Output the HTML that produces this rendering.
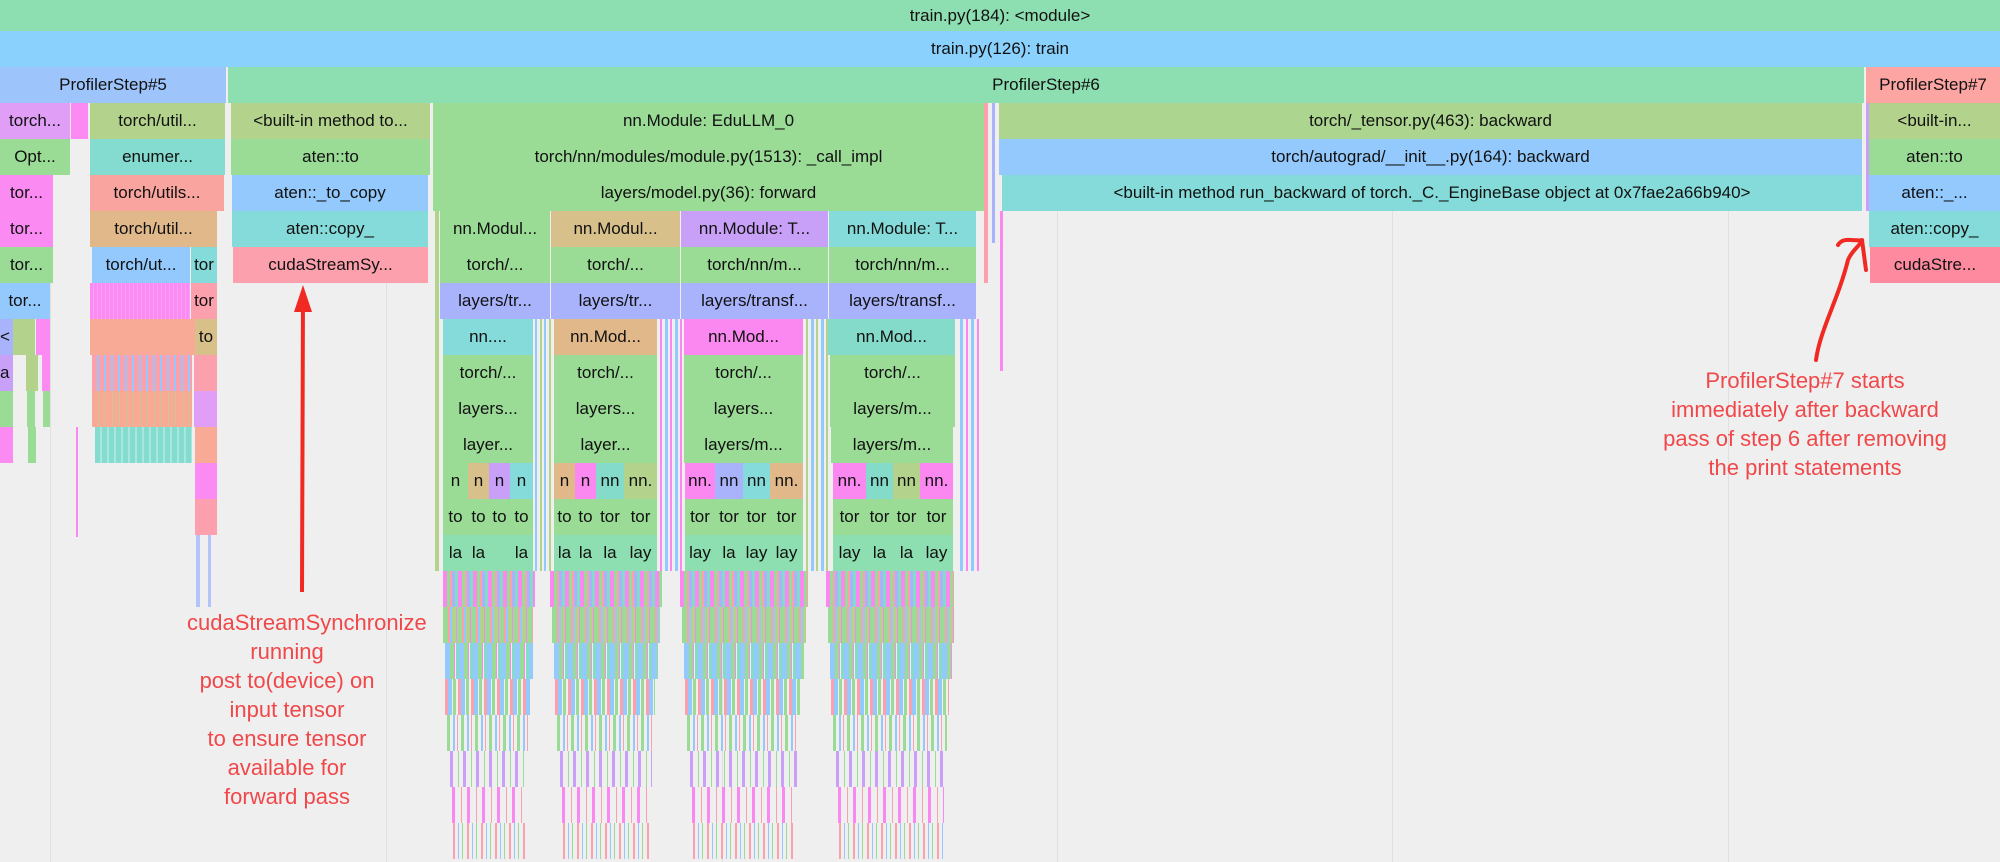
<!DOCTYPE html>
<html><head><meta charset="utf-8"><style>
html,body{margin:0;padding:0;width:2000px;height:862px;overflow:hidden;background:#efefef;}
body{position:relative;font-family:"Liberation Sans",Arial,sans-serif;}
.g{position:absolute;top:0;width:1px;height:862px;background:#e0e0e0;}
.b{position:absolute;height:36px;line-height:36px;text-align:center;overflow:hidden;white-space:nowrap;font-size:17px;color:#111;}
.n{position:absolute;height:36px;}
.ann{position:absolute;color:#f0484a;font-size:22px;text-align:center;line-height:29px;white-space:nowrap;}
.r1{background:repeating-linear-gradient(90deg,#fb88f0 0 4px,#9adb96 4px 7px,#fda0ae 7px 9px,#a9b3fb 9px 12px,#84dbca 12px 15px)}
.r2{background:repeating-linear-gradient(90deg,#9adb96 0 5px,#fda0ae 5px 7px,#93c9fd 7px 9px,#b3d38d 9px 13px,#fb88f0 13px 14px)}
.r3{background:repeating-linear-gradient(90deg,#93c9fd 0 5px,#9adb96 5px 9px,#fb88f0 9px 10px,transparent 10px 11px,#84dbca 11px 14px)}
.r4{background:repeating-linear-gradient(90deg,#fda0ae 0 3px,#93c9fd 3px 7px,transparent 7px 8px,#9adb96 8px 11px,transparent 11px 13px)}
.r5{background:repeating-linear-gradient(90deg,#9adb96 0 3px,transparent 3px 6px,#93c9fd 6px 8px,transparent 8px 10px,#fda0ae 10px 11px,transparent 11px 14px)}
.r6{background:repeating-linear-gradient(90deg,#c9a0f8 0 3px,transparent 3px 8px,#9adb96 8px 9px,transparent 9px 13px)}
.r7{background:repeating-linear-gradient(90deg,#fb88f0 0 3px,transparent 3px 9px,#fda0ae 9px 10px,transparent 10px 15px)}
.r8{background:repeating-linear-gradient(90deg,#fda0ae 0 2px,transparent 2px 5px,#93c9fd 5px 6px,transparent 6px 9px,#9adb96 9px 10px,transparent 10px 14px)}
</style></head><body>
<div class="g" style="left:50px"></div><div class="g" style="left:386px"></div><div class="g" style="left:722px"></div>
<div class="g" style="left:1057px"></div><div class="g" style="left:1392px"></div><div class="g" style="left:1728px"></div>

<div class="b" style="left:0;top:0;width:2000px;height:31px;line-height:31px;background:#8ddeb1">train.py(184): &lt;module&gt;</div>
<div class="b" style="left:0;top:31px;width:2000px;background:#8ad2fd">train.py(126): train</div>
<div class="b" style="left:0;top:67px;width:226px;background:#9ec5fb">ProfilerStep#5</div>
<div class="b" style="left:228px;top:67px;width:1636px;background:#8ddeb1">ProfilerStep#6</div>
<div class="b" style="left:1866px;top:67px;width:134px;background:#fca5a2">ProfilerStep#7</div>

<div class="b" style="left:0;top:103px;width:70px;background:#e09ef6">torch...</div>
<div class="n" style="left:71px;top:103px;width:17px;background:#fb8af2"></div>
<div class="b" style="left:90px;top:103px;width:135px;background:#b3d38d">torch/util...</div>
<div class="b" style="left:231px;top:103px;width:199px;background:#b3d38d">&lt;built-in method to...</div>
<div class="b" style="left:433px;top:103px;width:551px;background:#9adb96">nn.Module: EduLLM_0</div>
<div class="b" style="left:999px;top:103px;width:863px;background:#acd58f">torch/_tensor.py(463): backward</div>
<div class="b" style="left:1869px;top:103px;width:131px;background:#b3d38d">&lt;built-in...</div>
<div class="b" style="left:0;top:139px;width:70px;background:#9adb96">Opt...</div>
<div class="b" style="left:90px;top:139px;width:135px;background:#84dbd0">enumer...</div>
<div class="b" style="left:231px;top:139px;width:199px;background:#9adb96">aten::to</div>
<div class="b" style="left:433px;top:139px;width:551px;background:#9adb96">torch/nn/modules/module.py(1513): _call_impl</div>
<div class="b" style="left:999px;top:139px;width:863px;background:#93c9fd">torch/autograd/__init__.py(164): backward</div>
<div class="b" style="left:1869px;top:139px;width:131px;background:#9adb96">aten::to</div>
<div class="b" style="left:0;top:175px;width:53px;background:#fb8af2">tor...</div>
<div class="b" style="left:90px;top:175px;width:134px;background:#f9a49e">torch/utils...</div>
<div class="b" style="left:232px;top:175px;width:196px;background:#93c9fd">aten::_to_copy</div>
<div class="b" style="left:433px;top:175px;width:551px;background:#9adb96">layers/model.py(36): forward</div>
<div class="b" style="left:1002px;top:175px;width:860px;background:#84dbd9">&lt;built-in method run_backward of torch._C._EngineBase object at 0x7fae2a66b940&gt;</div>
<div class="b" style="left:1869px;top:175px;width:131px;background:#93c9fd">aten::_...</div>
<div class="b" style="left:0;top:211px;width:53px;background:#fb8af2">tor...</div>
<div class="b" style="left:90px;top:211px;width:127px;background:#e1b88a">torch/util...</div>
<div class="b" style="left:232px;top:211px;width:196px;background:#84dbd9">aten::copy_</div>
<div class="b" style="left:440px;top:211px;width:110px;background:#9adb96">nn.Modul...</div>
<div class="b" style="left:551px;top:211px;width:129px;background:#d7c08a">nn.Modul...</div>
<div class="b" style="left:681px;top:211px;width:147px;background:#c9a0f8">nn.Module: T...</div>
<div class="b" style="left:829px;top:211px;width:147px;background:#84dbd9">nn.Module: T...</div>
<div class="b" style="left:1869px;top:211px;width:131px;background:#84dbd9">aten::copy_</div>
<div class="b" style="left:0;top:247px;width:53px;background:#9adb96">tor...</div>
<div class="b" style="left:92px;top:247px;width:98px;background:#93c9fd">torch/ut...</div>
<div class="b" style="left:191px;top:247px;width:26px;background:#84dbd9">tor</div>
<div class="b" style="left:233px;top:247px;width:195px;background:#fda0ae">cudaStreamSy...</div>
<div class="b" style="left:440px;top:247px;width:110px;background:#9adb96">torch/...</div>
<div class="b" style="left:551px;top:247px;width:129px;background:#9adb96">torch/...</div>
<div class="b" style="left:681px;top:247px;width:147px;background:#9adb96">torch/nn/m...</div>
<div class="b" style="left:829px;top:247px;width:147px;background:#9adb96">torch/nn/m...</div>
<div class="b" style="left:1870px;top:247px;width:130px;background:#fd8a9e">cudaStre...</div>
<div class="b" style="left:0;top:283px;width:50px;background:#93c9fd">tor...</div>
<div class="n" style="left:90px;top:283px;width:100px;background:repeating-linear-gradient(90deg,#fb8af2 0 3px,#fca0f5 3px 4px)"></div>
<div class="b" style="left:191px;top:283px;width:26px;background:#fda0ae">tor</div>
<div class="b" style="left:440px;top:283px;width:110px;background:#a9b3fb">layers/tr...</div>
<div class="b" style="left:551px;top:283px;width:129px;background:#a9b3fb">layers/tr...</div>
<div class="b" style="left:681px;top:283px;width:147px;background:#a9b3fb">layers/transf...</div>
<div class="b" style="left:829px;top:283px;width:147px;background:#a9b3fb">layers/transf...</div>
<div class="b" style="left:0;top:319px;width:13px;background:#a9b3fb;text-align:left">&lt;</div>
<div class="n" style="left:13px;top:319px;width:22px;background:#b3d38d"></div>
<div class="n" style="left:36px;top:319px;width:14px;background:#fb8af2"></div>
<div class="n" style="left:90px;top:319px;width:105px;background:#f8aa96"></div>
<div class="b" style="left:195px;top:319px;width:22px;background:#d7c08a">to</div>
<div class="b" style="left:443px;top:319px;width:90px;background:#84dbd9">nn....</div>
<div class="b" style="left:554px;top:319px;width:103px;background:#e1b88a">nn.Mod...</div>
<div class="b" style="left:684px;top:319px;width:119px;background:#fb88f0">nn.Mod...</div>
<div class="b" style="left:828px;top:319px;width:127px;background:#84dbca">nn.Mod...</div>
<div class="b" style="left:0;top:355px;width:13px;background:#c9a0f8;text-align:left">a</div>
<div class="n" style="left:26px;top:355px;width:12px;background:#b3d38d"></div>
<div class="n" style="left:42px;top:355px;width:8px;background:#fb8af2"></div>
<div class="n" style="left:92px;top:355px;width:100px;background:repeating-linear-gradient(90deg,#fda0ae 0 5px,#93c9fd 5px 7px)"></div>
<div class="n" style="left:194px;top:355px;width:23px;background:#fda0ae"></div>
<div class="b" style="left:443px;top:355px;width:90px;background:#9adb96">torch/...</div>
<div class="b" style="left:554px;top:355px;width:103px;background:#9adb96">torch/...</div>
<div class="b" style="left:684px;top:355px;width:119px;background:#9adb96">torch/...</div>
<div class="b" style="left:830px;top:355px;width:125px;background:#9adb96">torch/...</div>
<div class="n" style="left:0;top:391px;width:13px;background:#9adb96"></div>
<div class="n" style="left:27px;top:391px;width:8px;background:#9adb96"></div>
<div class="n" style="left:43px;top:391px;width:7px;background:#9adb96"></div>
<div class="n" style="left:92px;top:391px;width:100px;background:repeating-linear-gradient(90deg,#f8aa96 0 6px,#c8c890 6px 7px)"></div>
<div class="n" style="left:194px;top:391px;width:23px;background:#e09ef6"></div>
<div class="b" style="left:443px;top:391px;width:90px;background:#9adb96">layers...</div>
<div class="b" style="left:554px;top:391px;width:103px;background:#9adb96">layers...</div>
<div class="b" style="left:684px;top:391px;width:119px;background:#9adb96">layers...</div>
<div class="b" style="left:830px;top:391px;width:125px;background:#9adb96">layers/m...</div>
<div class="n" style="left:0;top:427px;width:13px;background:#fb8af2"></div>
<div class="n" style="left:28px;top:427px;width:8px;background:#9adb96"></div>
<div class="n" style="left:95px;top:427px;width:97px;background:repeating-linear-gradient(90deg,#84dbd0 0 5px,#a8e8dc 5px 7px)"></div>
<div class="n" style="left:195px;top:427px;width:22px;background:#f8aa96"></div>
<div class="b" style="left:443px;top:427px;width:90px;background:#9adb96">layer...</div>
<div class="b" style="left:554px;top:427px;width:103px;background:#9adb96">layer...</div>
<div class="b" style="left:684px;top:427px;width:119px;background:#9adb96">layers/m...</div>
<div class="b" style="left:831px;top:427px;width:122px;background:#9adb96">layers/m...</div>
<div class="n" style="left:195px;top:463px;width:22px;background:#fb8af2"></div>
<div class="n" style="left:195px;top:499px;width:22px;background:#fda0ae"></div>

<div class="b" style="left:443px;top:463px;width:25px;background:#9adb96">n</div>
<div class="b" style="left:468px;top:463px;width:21px;background:#d7c08a">n</div>
<div class="b" style="left:489px;top:463px;width:21px;background:#c9a0f8">n</div>
<div class="b" style="left:510px;top:463px;width:23px;background:#84dbd9">n</div>
<div class="b" style="left:554px;top:463px;width:21px;background:#e1b88a">n</div>
<div class="b" style="left:575px;top:463px;width:21px;background:#fb88f0">n</div>
<div class="b" style="left:596px;top:463px;width:28px;background:#84dbca">nn</div>
<div class="b" style="left:624px;top:463px;width:33px;background:#b3d38d">nn.</div>
<div class="b" style="left:685px;top:463px;width:30px;background:#fb88f0">nn.</div>
<div class="b" style="left:715px;top:463px;width:28px;background:#a9b3fb">nn</div>
<div class="b" style="left:743px;top:463px;width:27px;background:#84dbd9">nn</div>
<div class="b" style="left:770px;top:463px;width:33px;background:#e1b88a">nn.</div>
<div class="b" style="left:833px;top:463px;width:33px;background:#fb88f0">nn.</div>
<div class="b" style="left:866px;top:463px;width:27px;background:#84dbca">nn</div>
<div class="b" style="left:893px;top:463px;width:27px;background:#b3d38d">nn</div>
<div class="b" style="left:920px;top:463px;width:33px;background:#fb88f0">nn.</div>
<div class="b" style="left:443px;top:499px;width:25px;background:#9adb96">to</div>
<div class="b" style="left:468px;top:499px;width:21px;background:#9adb96">to</div>
<div class="b" style="left:489px;top:499px;width:21px;background:#9adb96">to</div>
<div class="b" style="left:510px;top:499px;width:23px;background:#9adb96">to</div>
<div class="b" style="left:554px;top:499px;width:21px;background:#9adb96">to</div>
<div class="b" style="left:575px;top:499px;width:21px;background:#9adb96">to</div>
<div class="b" style="left:596px;top:499px;width:28px;background:#9adb96">tor</div>
<div class="b" style="left:624px;top:499px;width:33px;background:#9adb96">tor</div>
<div class="b" style="left:685px;top:499px;width:30px;background:#9adb96">tor</div>
<div class="b" style="left:715px;top:499px;width:28px;background:#9adb96">tor</div>
<div class="b" style="left:743px;top:499px;width:27px;background:#9adb96">tor</div>
<div class="b" style="left:770px;top:499px;width:33px;background:#9adb96">tor</div>
<div class="b" style="left:833px;top:499px;width:33px;background:#9adb96">tor</div>
<div class="b" style="left:866px;top:499px;width:27px;background:#9adb96">tor</div>
<div class="b" style="left:893px;top:499px;width:27px;background:#9adb96">tor</div>
<div class="b" style="left:920px;top:499px;width:33px;background:#9adb96">tor</div>
<div class="b" style="left:443px;top:535px;width:25px;background:#8ddeb1">la</div>
<div class="b" style="left:468px;top:535px;width:21px;background:#8ddeb1">la</div>
<div class="b" style="left:489px;top:535px;width:21px;background:#8ddeb1"></div>
<div class="b" style="left:510px;top:535px;width:23px;background:#8ddeb1">la</div>
<div class="b" style="left:554px;top:535px;width:21px;background:#8ddeb1">la</div>
<div class="b" style="left:575px;top:535px;width:21px;background:#8ddeb1">la</div>
<div class="b" style="left:596px;top:535px;width:28px;background:#8ddeb1">la</div>
<div class="b" style="left:624px;top:535px;width:33px;background:#8ddeb1">lay</div>
<div class="b" style="left:685px;top:535px;width:30px;background:#8ddeb1">lay</div>
<div class="b" style="left:715px;top:535px;width:28px;background:#8ddeb1">la</div>
<div class="b" style="left:743px;top:535px;width:27px;background:#8ddeb1">lay</div>
<div class="b" style="left:770px;top:535px;width:33px;background:#8ddeb1">lay</div>
<div class="b" style="left:833px;top:535px;width:33px;background:#8ddeb1">lay</div>
<div class="b" style="left:866px;top:535px;width:27px;background:#8ddeb1">la</div>
<div class="b" style="left:893px;top:535px;width:27px;background:#8ddeb1">la</div>
<div class="b" style="left:920px;top:535px;width:33px;background:#8ddeb1">lay</div>

<div class="n" style="left:984px;top:103px;width:4px;height:180px;background:#fda0ae"></div>
<div class="n" style="left:992px;top:103px;width:3px;height:140px;background:#a9b3fb"></div>
<div class="n" style="left:435px;top:211px;width:4px;height:360px;background:#b3d38d"></div>
<div class="n" style="left:960px;top:319px;width:20px;height:252px;background:repeating-linear-gradient(90deg,#93c9fd 0 3px,transparent 3px 6px,#fb88f0 6px 8px,transparent 8px 11px)"></div>
<div class="n" style="left:535px;top:319px;width:18px;height:252px;background:repeating-linear-gradient(90deg,#93c9fd 0 2px,transparent 2px 5px,#b3d38d 5px 7px,transparent 7px 9px)"></div>
<div class="n" style="left:660px;top:319px;width:22px;height:252px;background:repeating-linear-gradient(90deg,#fb88f0 0 2px,transparent 2px 5px,#93c9fd 5px 8px,transparent 8px 10px)"></div>
<div class="n" style="left:806px;top:319px;width:22px;height:252px;background:repeating-linear-gradient(90deg,#b3d38d 0 2px,transparent 2px 5px,#93c9fd 5px 8px,transparent 8px 10px)"></div>
<div class="n" style="left:1866px;top:103px;width:3px;height:108px;background:#c9a0f8"></div>
<div class="n" style="left:1000px;top:211px;width:3px;height:160px;background:#fb88f0"></div>

<!-- noise rows, grouped -->
<div class="n r1" style="left:443px;top:571px;width:92px"></div><div class="n r1" style="left:550px;top:571px;width:112px"></div><div class="n r1" style="left:680px;top:571px;width:128px"></div><div class="n r1" style="left:826px;top:571px;width:128px"></div>
<div class="n r2" style="left:443px;top:607px;width:90px"></div><div class="n r2" style="left:552px;top:607px;width:108px"></div><div class="n r2" style="left:682px;top:607px;width:124px"></div><div class="n r2" style="left:828px;top:607px;width:126px"></div>
<div class="n r3" style="left:445px;top:643px;width:88px"></div><div class="n r3" style="left:554px;top:643px;width:104px"></div><div class="n r3" style="left:684px;top:643px;width:120px"></div><div class="n r3" style="left:830px;top:643px;width:122px"></div>
<div class="n r4" style="left:445px;top:679px;width:86px"></div><div class="n r4" style="left:555px;top:679px;width:100px"></div><div class="n r4" style="left:685px;top:679px;width:116px"></div><div class="n r4" style="left:831px;top:679px;width:118px"></div>
<div class="n r5" style="left:447px;top:715px;width:82px"></div><div class="n r5" style="left:557px;top:715px;width:96px"></div><div class="n r5" style="left:687px;top:715px;width:112px"></div><div class="n r5" style="left:833px;top:715px;width:114px"></div>
<div class="n r6" style="left:450px;top:751px;width:78px"></div><div class="n r6" style="left:560px;top:751px;width:92px"></div><div class="n r6" style="left:690px;top:751px;width:108px"></div><div class="n r6" style="left:836px;top:751px;width:110px"></div>
<div class="n r7" style="left:452px;top:787px;width:74px"></div><div class="n r7" style="left:562px;top:787px;width:88px"></div><div class="n r7" style="left:692px;top:787px;width:104px"></div><div class="n r7" style="left:838px;top:787px;width:106px"></div>
<div class="n r8" style="left:453px;top:823px;width:72px"></div><div class="n r8" style="left:563px;top:823px;width:86px"></div><div class="n r8" style="left:693px;top:823px;width:102px"></div><div class="n r8" style="left:839px;top:823px;width:104px"></div>
<div class="n" style="left:196px;top:535px;width:4px;height:72px;background:#b3c4fb"></div>
<div class="n" style="left:208px;top:535px;width:3px;height:72px;background:#b3c4fb"></div>
<div class="n" style="left:76px;top:427px;width:2px;height:110px;background:#fb88f0"></div>

<svg style="position:absolute;left:0;top:0" width="2000" height="862">
<line x1="303" y1="292" x2="302" y2="592" stroke="#f02a22" stroke-width="4"/>
<polygon points="303,285 294,312 312,312" fill="#f02a22"/>
<path d="M1816 360 C1820 330 1838 300 1848 260 C1852 250 1861 245 1862 240 M1862 240 L1866 270 M1862 240 C1855 242 1843 236 1838 245" stroke="#f02a22" stroke-width="4" fill="none" stroke-linecap="round"/>
</svg>
<div class="ann" style="left:187px;top:608px;width:200px">cudaStreamSynchronize<br>running<br>post to(device) on<br>input tensor<br>to ensure tensor<br>available for<br>forward pass</div>
<div class="ann" style="left:1640px;top:366px;width:330px">ProfilerStep#7 starts<br>immediately after backward<br>pass of step 6 after removing<br>the print statements</div>
</body></html>
